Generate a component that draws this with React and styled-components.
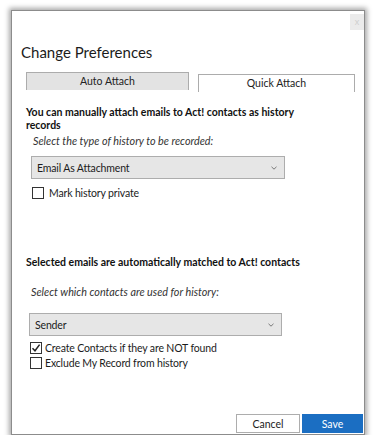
import React from 'react';
import styled, { createGlobalStyle } from 'styled-components';

const GlobalStyle = createGlobalStyle`
  html, body {
    margin: 0;
    padding: 0;
    background: #ffffff;
  }
  body {
    font-family: Lato, "Open Sans", sans-serif;
    color: #1b1b1b;
  }
`;

function Chevron() {
    return (
        <svg width="6" height="4" viewBox="0 0 6 4">
            <path d="M0.5 0.8 L3 3.2 L5.5 0.8" fill="none" stroke="#777" strokeWidth="1" />
        </svg>
    );
}

function Check() {
    return (
        <svg width="10" height="10" viewBox="0 0 10 10">
            <path d="M1.5 5.2 L4 7.8 L8.6 1.6" fill="none" stroke="#222" strokeWidth="1.5" />
        </svg>
    );
}

function CheckItem({ checked, label, gap }) {
    return (
        <CheckRow gap={gap}>
            <Box>{checked && <Check />}</Box>
            <CheckLabel>{label}</CheckLabel>
        </CheckRow>
    );
}

function App() {
    return (
        <>
            <GlobalStyle />
            <Dialog>
                <TopBar>
                    <CloseButton>x</CloseButton>
                </TopBar>
                <Title>Change Preferences</Title>
                <Tabs>
                    <Tab>Auto Attach</Tab>
                    <Tab active>Quick Attach</Tab>
                </Tabs>

                <Section>
                    <Heading>You can manually attach emails to Act! contacts as history records</Heading>
                    <Hint indent={7}>Select the type of history to be recorded:</Hint>
                    <Select indent={5} width={254} top={9}>
                        <span>Email As Attachment</span>
                        <Chevron />
                    </Select>
                    <Checks indent={6} top={8}>
                        <CheckItem label="Mark history private" gap={5} />
                    </Checks>
                </Section>

                <Section top={57}>
                    <Heading>Selected emails are automatically matched to Act! contacts</Heading>
                    <Hint indent={5} top={16}>Select which contacts are used for history:</Hint>
                    <Select indent={3} width={253} top={15}>
                        <span>Sender</span>
                        <Chevron />
                    </Select>
                    <Checks indent={4} top={6}>
                        <CheckItem checked label="Create Contacts if they are NOT found" gap={3} />
                        <CheckItem label="Exclude My Record from history" gap={3} />
                    </Checks>
                </Section>

                <Footer>
                    <Button>Cancel</Button>
                    <Button primary>Save</Button>
                </Footer>
            </Dialog>
        </>
    );
}

const Dialog = styled.div`
box-sizing: border-box;
margin: 10px 0 0 11px;
width: 354px;
height: 425px;
border: 1px solid #8c8c8c;
background: #fff;
box-shadow: 0 0 5px 2px rgba(0, 0, 0, 0.35);
display: flex;
flex-direction: column;
`;

const TopBar = styled.div`
display: flex;
justify-content: flex-end;
padding-top: 3px;
`;

const CloseButton = styled.div`
width: 14px;
height: 16px;
background: #ebebeb;
color: #cfcfcf;
font-size: 9px;
line-height: 15px;
text-align: center;
`;

const Title = styled.div`
margin: 12px 0 0 9px;
font-size: 15px;
line-height: 20px;
color: #1b1b1b;
`;

const Tabs = styled.div`
display: flex;
align-items: flex-start;
gap: 9px;
margin: 10px 0 0 14px;
`;

const Tab = styled.div`
box-sizing: border-box;
width: ${p => p.active ? 157 : 163}px;
height: 18px;
margin-top: ${p => p.active ? 2 : 0}px;
border: 1px solid #acacac;
border-bottom: none;
background: ${p => p.active ? '#ffffff' : '#e3e3e3'};
font-size: 10.5px;
line-height: 17px;
text-align: center;
color: #222;
`;

const Section = styled.div`
display: flex;
flex-direction: column;
align-items: flex-start;
margin: ${p => p.top || 14}px 0 0 14px;
`;

const Heading = styled.div`
max-width: 300px;
font-size: 10.5px;
font-weight: bold;
line-height: 13px;
color: #111;
`;

const Hint = styled.div`
margin: ${p => p.top || 2}px 0 0 ${p => p.indent}px;
font-size: 10.8px;
font-style: italic;
line-height: 13px;
color: #333;
`;

const Select = styled.div`
box-sizing: border-box;
display: flex;
align-items: center;
justify-content: space-between;
width: ${p => p.width}px;
height: 23px;
margin: ${p => p.top}px 0 0 ${p => p.indent}px;
padding: 0 7px 0 5px;
border: 1px solid #adadad;
background: #e6e6e6;
font-size: 10.5px;
letter-spacing: -0.15px;
color: #1b1b1b;
`;

const Checks = styled.div`
display: flex;
flex-direction: column;
gap: 3px;
margin: ${p => p.top}px 0 0 ${p => p.indent}px;
`;

const CheckRow = styled.div`
display: flex;
align-items: center;
gap: ${p => p.gap}px;
height: 12px;
`;

const Box = styled.div`
box-sizing: border-box;
width: 12px;
height: 12px;
border: 1px solid #333;
background: #fff;
display: flex;
align-items: center;
justify-content: center;
`;

const CheckLabel = styled.span`
font-size: 10.5px;
letter-spacing: -0.15px;
line-height: 13px;
color: #1b1b1b;
`;

const Footer = styled.div`
display: flex;
justify-content: flex-end;
gap: 2px;
margin-top: auto;
padding: 0 1px 1px 0;
`;

const Button = styled.button`
box-sizing: border-box;
width: ${p => p.primary ? 61 : 64}px;
height: 19px;
padding: 0;
border: 1px solid ${p => p.primary ? '#1b6ec2' : '#adadad'};
background: ${p => p.primary ? '#1b6ec2' : '#ffffff'};
color: ${p => p.primary ? '#ffffff' : '#222'};
font-family: Lato, "Open Sans", sans-serif;
font-size: 10.5px;
cursor: pointer;
`;

export default App;
